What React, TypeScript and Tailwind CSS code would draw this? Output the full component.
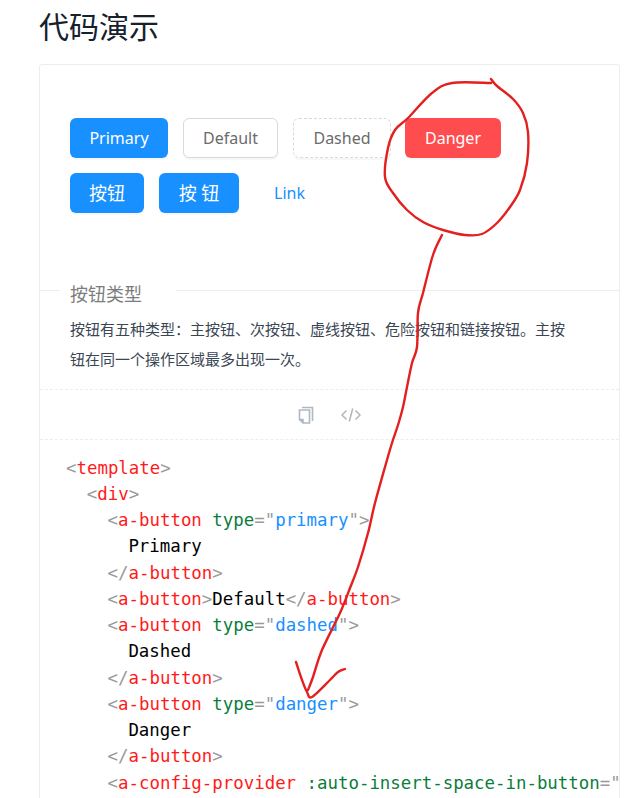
import React from 'react';

const cjk = '"Noto Sans", "Noto Sans CJK SC", sans-serif';

const btn = 'h-10 rounded-md text-base flex items-center justify-center shadow-[0_2px_0_rgba(0,0,0,0.03)]';

type Tok = [string, string];

const T = 'text-[#ff1a1a]'; // tag
const P = 'text-[#999999]'; // punctuation
const A = 'text-[#0a7d3c]'; // attr
const V = 'text-[#1890ff]'; // value
const X = 'text-black';

const lines: { indent: number; toks: Tok[] }[] = [
  { indent: 0, toks: [['<', P], ['template', T], ['>', P]] },
  { indent: 2, toks: [['<', P], ['div', T], ['>', P]] },
  { indent: 4, toks: [['<', P], ['a-button', T], [' ', X], ['type', A], ['="', P], ['primary', V], ['">', P]] },
  { indent: 6, toks: [['Primary', X]] },
  { indent: 4, toks: [['</', P], ['a-button', T], ['>', P]] },
  { indent: 4, toks: [['<', P], ['a-button', T], ['>', P], ['Default', X], ['</', P], ['a-button', T], ['>', P]] },
  { indent: 4, toks: [['<', P], ['a-button', T], [' ', X], ['type', A], ['="', P], ['dashed', V], ['">', P]] },
  { indent: 6, toks: [['Dashed', X]] },
  { indent: 4, toks: [['</', P], ['a-button', T], ['>', P]] },
  { indent: 4, toks: [['<', P], ['a-button', T], [' ', X], ['type', A], ['="', P], ['danger', V], ['">', P]] },
  { indent: 6, toks: [['Danger', X]] },
  { indent: 4, toks: [['</', P], ['a-button', T], ['>', P]] },
  { indent: 4, toks: [['<', P], ['a-config-provider', T], [' ', X], [':auto-insert-space-in-button', A], ['="', P]] },
];

// turn hand-picked points into a smooth stroke
const smooth = (pts: number[][]) => {
  let d = `M${pts[0][0]} ${pts[0][1]}`;
  for (let i = 0; i < pts.length - 1; i++) {
    const p0 = pts[Math.max(i - 1, 0)];
    const p1 = pts[i];
    const p2 = pts[i + 1];
    const p3 = pts[Math.min(i + 2, pts.length - 1)];
    d += ` C${p1[0] + (p2[0] - p0[0]) / 6} ${p1[1] + (p2[1] - p0[1]) / 6} ${p2[0] - (p3[0] - p1[0]) / 6} ${p2[1] - (p3[1] - p1[1]) / 6} ${p2[0]} ${p2[1]}`;
  }
  return d;
};

const circle = [
  [491, 79], [497, 86], [513, 99], [523, 113], [528, 132], [527, 163], [520, 190], [510, 207], [497, 223], [482, 234],
  [465, 235], [443, 230], [423, 222], [407, 210], [393, 193], [385, 177], [388, 148], [395, 130], [408, 118], [432, 93],
  [452, 83], [491, 83],
];
const arrow = [
  [442, 235], [433, 255], [423, 293], [418, 313], [417, 347], [412, 363], [407, 387], [403, 407], [398, 425], [392, 443],
  [387, 460], [375, 503], [368, 533], [358, 567], [350, 588], [340, 613], [322, 650], [313, 677], [308, 690],
];
const head = [[296, 662], [302, 680], [307, 692], [312, 697], [330, 680], [338, 672], [345, 669]];

const App: React.FC = () => {
  return (
    <div className="relative w-[635px] h-[798px] overflow-hidden bg-white" style={{ fontFamily: cjk }}>
      <div className="ml-[39px] w-[581px]">
        <h1 className="h-[64px] pt-[6px] text-[30px] leading-[42px] font-normal text-[#16212c]">代码演示</h1>
        <div className="border border-[#ebedf0] rounded-[3px] h-[800px]">
          {/* demo buttons */}
          <div className="h-[212px] pt-[53px] pl-[30px] flex flex-col gap-[15px]">
            <div className="flex gap-[15px]">
              <div className={`${btn} w-[98px] bg-[#1890ff] text-white`}>Primary</div>
              <div className={`${btn} w-[95px] border border-[#d9d9d9] text-[#6b6b6b]`}>Default</div>
              <div className={`${btn} w-[98px] -mr-px border border-dashed border-[#d9d9d9] text-[#6b6b6b]`}>Dashed</div>
              <div className={`${btn} w-[96px] bg-[#ff4d4f] text-white`}>Danger</div>
            </div>
            <div className="flex gap-[15px]">
              <div className={`${btn} w-[74px] bg-[#1890ff] text-white text-[18px]`}>按钮</div>
              <div className={`${btn} w-[80px] bg-[#1890ff] text-white text-[18px]`}>按 钮</div>
              <div className="h-10 px-5 text-base flex items-center text-[#1890ff]">Link</div>
            </div>
          </div>

          {/* meta */}
          <div className="flex h-[26px] items-center">
            <div className="w-5 h-px bg-[#ebedf0]" />
            <div className="pl-2.5 pr-[34px] pt-[8px] text-[18px] leading-[26px] text-[#7d7d7d]">按钮类型</div>
            <div className="flex-1 h-px bg-[#ebedf0]" />
          </div>
          <div className="pl-[30px] w-[530px] pt-[11px] pb-[15px] text-[15px] leading-[30px] text-[#3a4654] h-[86px]">
            按钮有五种类型：主按钮、次按钮、虚线按钮、危险按钮和链接按钮。主按钮在同一个操作区域最多出现一次。
          </div>

          {/* actions */}
          <div className="h-[51px] border-y border-dashed border-[#ebedf0] flex items-center justify-center gap-[27px]">
            <svg width="16" height="18" viewBox="0 0 16 18" fill="none" stroke="#aeb8c2" strokeWidth="1.6">
              <path d="M4 1.5 H14.5 V15" />
              <path d="M1.5 4 H11.5 V17 H5 L1.5 13.5 Z" />
              <path d="M1.5 13.5 H5 V17" fill="#aeb8c2" />
            </svg>
            <svg width="20" height="14" viewBox="0 0 20 14" fill="none" stroke="#b5b5b5" strokeWidth="1.5">
              <path d="M5.5 2.5 L1 7 L5.5 11.5" />
              <path d="M14.5 2.5 L19 7 L14.5 11.5" />
              <path d="M11.7 0.5 L8.3 13.5" />
            </svg>
          </div>

          {/* code */}
          <pre
            className="pl-[26px] pt-[14.5px] overflow-hidden text-[17.4px] leading-[26.25px]"
            style={{ fontFamily: '"DejaVu Sans Mono", monospace' }}
          >
            {lines.map((line, i) => (
              <div key={i} style={{ paddingLeft: line.indent * 10.4 }} className="whitespace-pre">
                {line.toks.map((t, j) => (
                  <span key={j} className={t[1]}>{t[0]}</span>
                ))}
              </div>
            ))}
          </pre>
        </div>
      </div>

      {/* hand drawn annotation */}
      <svg className="absolute inset-0 pointer-events-none" width="635" height="798" fill="none" stroke="#e3201f" strokeWidth="2.4" strokeLinejoin="round" strokeLinecap="round">
        <path d={smooth(circle)} />
        <path d={smooth(arrow)} />
        <path d={smooth(head)} />
      </svg>
    </div>
  );
};

export default App;
